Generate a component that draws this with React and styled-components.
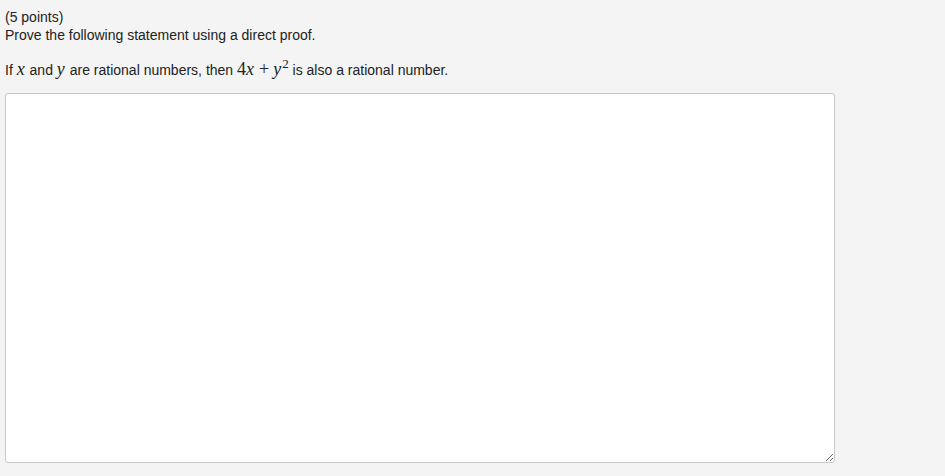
import React from 'react';
import styled, { createGlobalStyle } from 'styled-components';

const GlobalStyle = createGlobalStyle`
  html, body {
    margin: 0;
    padding: 0;
    background: #f4f4f4;
  }
`;

const Page = styled.div`
  min-height: 476px;
  padding: 8px 0 0 5px;
  font-family: "Liberation Sans", Arial, sans-serif;
  font-size: 14px;
  color: #222;
  background: #f4f4f4;
`;

const Line = styled.div`
  line-height: 18px;
`;

const Statement = styled.p`
  margin: 15px 0 0;
  line-height: 20px;
`;

const Math = styled.span`
  font-family: "Liberation Serif", "Times New Roman", serif;
  font-size: 18px;
`;

const MathVar = styled.span`
  font-style: italic;
  padding-right: 1px;
`;

const MathOp = styled.span`
  margin: 0 4px;
`;

const Sup = styled.sup`
  font-size: 13px;
  line-height: 0;
`;

const Answer = styled.textarea`
  display: block;
  box-sizing: border-box;
  margin-top: 13px;
  width: 830px;
  height: 370px;
  background: #fff;
  border: 1px solid #c8c8c8;
  border-radius: 3px;
  font-family: "Liberation Sans", Arial, sans-serif;
  font-size: 14px;
  padding: 6px;
  outline: none;
`;

const App = () => {
  return (
    <Page>
      <GlobalStyle />
      <Line>(5 points)</Line>
      <Line>Prove the following statement using a direct proof.</Line>
      <Statement>
        If <Math><MathVar>x</MathVar></Math> and <Math><MathVar>y</MathVar></Math> are rational numbers, then{' '}
        <Math>
          4<MathVar>x</MathVar>
          <MathOp>+</MathOp>
          <MathVar>y</MathVar>
          <Sup>2</Sup>
        </Math>{' '}
        is also a rational number.
      </Statement>
      <Answer />
    </Page>
  );
};

export default App;
